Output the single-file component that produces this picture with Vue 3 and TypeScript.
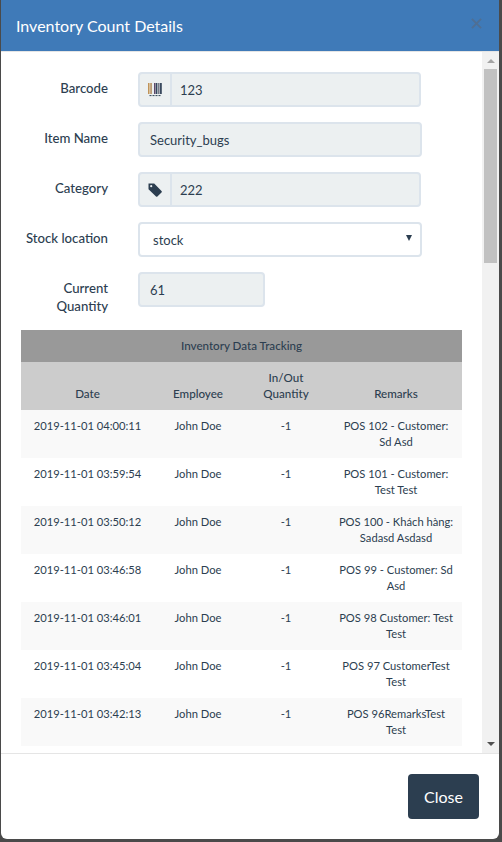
<script setup lang="ts">
interface Row { date: string; remarks: string }
const rows: Row[] = [
  { date: '2019-11-01 04:00:11', remarks: 'POS 102 - Customer: Sd Asd' },
  { date: '2019-11-01 03:59:54', remarks: 'POS 101 - Customer: Test Test' },
  { date: '2019-11-01 03:50:12', remarks: 'POS 100 - Khách hàng: Sadasd Asdasd' },
  { date: '2019-11-01 03:46:58', remarks: 'POS 99 - Customer: Sd Asd' },
  { date: '2019-11-01 03:46:01', remarks: 'POS 98 Customer: Test Test' },
  { date: '2019-11-01 03:45:04', remarks: 'POS 97 CustomerTest Test' },
  { date: '2019-11-01 03:42:13', remarks: 'POS 96RemarksTest Test' },
]
</script>

<template>
  <div class="page">
    <div class="modal">
      <header class="head">
        <h1 class="title">Inventory Count Details</h1>
        <svg class="x" viewBox="0 0 12 12" width="11" height="11"><path d="M1 1l10 10M11 1L1 11" stroke="#4f6f94" stroke-width="2" fill="none" /></svg>
      </header>
      <div class="middle">
        <div class="content">
          <div class="row">
            <label class="lbl">Barcode</label>
            <div class="group">
              <span class="addon">
                <svg viewBox="0 0 14 14" width="14" height="14">
                  <rect x="0" y="0" width="1.4" height="11" fill="#c0935a" />
                  <rect x="1.4" y="0" width="1" height="11" fill="#d8b98a" />
                  <rect x="2.4" y="0" width="1.4" height="11" fill="#b08a5a" />
                  <rect x="6" y="0" width="1.6" height="11" fill="#5a4a6a" />
                  <rect x="8" y="0" width="1.4" height="11" fill="#34495e" />
                  <rect x="10" y="0" width="1" height="11" fill="#7a7a8a" />
                  <rect x="11.6" y="0" width="2.2" height="11" fill="#3a4a5e" />
                  <path d="M1.5 12.6h11" stroke="#2c3e50" stroke-width="1" stroke-dasharray="2 1" />
                </svg>
              </span>
              <span class="val">123</span>
            </div>
          </div>
          <div class="row">
            <label class="lbl">Item Name</label>
            <div class="field wide">Security_bugs</div>
          </div>
          <div class="row">
            <label class="lbl">Category</label>
            <div class="group">
              <span class="addon">
                <svg viewBox="0 0 14 14" width="14" height="14">
                  <path d="M0.5 0.5h5.7L13.5 8a1 1 0 0 1 0 1.4L9.4 13.5a1 1 0 0 1-1.4 0L0.5 6.2z" fill="#2c3e50" />
                  <circle cx="3.2" cy="3.2" r="1.1" fill="#ecf0f1" />
                </svg>
              </span>
              <span class="val">222</span>
            </div>
          </div>
          <div class="row">
            <label class="lbl">Stock location</label>
            <div class="select">
              <span>stock</span>
              <i class="caret"></i>
            </div>
          </div>
          <div class="row qty">
            <label class="lbl">Current Quantity</label>
            <div class="field short">61</div>
          </div>
          <table class="tbl">
            <colgroup>
              <col class="c1" /><col class="c2" /><col class="c3" /><col class="c4" />
            </colgroup>
            <thead>
              <tr class="t1"><th colspan="4">Inventory Data Tracking</th></tr>
              <tr class="t2">
                <th>Date</th><th>Employee</th><th>In/Out Quantity</th><th>Remarks</th>
              </tr>
            </thead>
            <tbody>
              <tr v-for="r in rows" :key="r.date">
                <td>{{ r.date }}</td><td>John Doe</td><td>-1</td><td>{{ r.remarks }}</td>
              </tr>
            </tbody>
          </table>
        </div>
        <div class="bar">
          <i class="arrow up"></i>
          <div class="thumb"></div>
          <i class="arrow down"></i>
        </div>
      </div>
      <footer class="foot">
        <button class="close" type="button">Close</button>
      </footer>
    </div>
  </div>
</template>

<style>
html, body { margin: 0; background: #4a4a4a; }
</style>

<style scoped>
.page {
  width: 502px;
  height: 842px;
  box-sizing: border-box;
  padding: 0 3px 3px 1px;
  background: #4a4a4a;
  font-family: Lato, "Noto Sans", sans-serif;
  color: #2c3e50;
  overflow: hidden;
}
.modal {
  height: 100%;
  display: flex;
  flex-direction: column;
  background: #fff;
  border-radius: 0 0 6px 6px;
  overflow: hidden;
}
.head {
  height: 52px;
  flex: none;
  box-sizing: border-box;
  padding: 0 17px 0 15px;
  background: #3f7ab8;
  border-bottom: 1px solid #e5e5e5;
  display: flex;
  align-items: center;
  justify-content: space-between;
}
.title { margin: 0; font-size: 16px; font-weight: 400; color: #fff; line-height: 51px; }
.x { margin-bottom: 5px; }
.middle { flex: 1; min-height: 0; display: flex; }
.content {
  flex: 1;
  min-width: 0;
  overflow: hidden;
  padding: 20px 20px 0 20px;
  box-sizing: border-box;
}
.row { display: flex; height: 35px; margin-bottom: 15px; }
.row.qty { height: 43px; margin-bottom: 15px; }
.lbl {
  width: 87px;
  flex: none;
  text-align: right;
  font-size: 13.2px;
  font-weight: 500;
  line-height: 18px;
  padding-top: 7px;
  margin-right: 30px;
}
.group, .field, .select {
  box-sizing: border-box;
  height: 35px;
  border: 2px solid #dce4ec;
  border-radius: 4px;
  font-size: 13px;
}
.group { width: 283px; display: flex; background: #ecf0f1; }
.addon {
  width: 30px;
  flex: none;
  display: flex;
  align-items: center;
  justify-content: center;
  border-right: 2px solid #dce4ec;
}
.val { padding-left: 8px; line-height: 32px; }
.field { background: #ecf0f1; padding-left: 10px; line-height: 32px; }
.wide { width: 284px; }
.short { width: 127px; }
.select {
  width: 284px;
  background: #fff;
  padding-left: 13px;
  line-height: 32px;
  position: relative;
}
.caret {
  position: absolute;
  right: 8px;
  top: 11px;
  border-left: 3px solid transparent;
  border-right: 3px solid transparent;
  border-top: 6px solid #2c3e50;
}
.tbl {
  width: 441px;
  border-collapse: collapse;
  table-layout: fixed;
  font-size: 11.2px;
  line-height: 16px;
}
.c1 { width: 133px; }
.c2, .c3 { width: 88px; }
.c4 { width: 132px; }
th, td { padding: 8px; text-align: center; }
th { font-weight: 500; vertical-align: bottom; font-size: 11.6px; }
td { vertical-align: top; font-weight: 400; }
.t1 th { background: #999; }
.t2 th { background: #ccc; }
tbody tr:nth-child(odd) td { background: #f9f9f9; }
.bar {
  width: 17px;
  flex: none;
  background: #f1f1f1;
  position: relative;
}
.thumb {
  position: absolute;
  top: 17px;
  left: 2px;
  width: 13px;
  height: 194px;
  background: #c1c1c1;
}
.arrow { position: absolute; left: 5px; border-left: 4px solid transparent; border-right: 4px solid transparent; }
.up { top: 7px; border-bottom: 4px solid #a3a3a3; }
.down { bottom: 7px; border-top: 4px solid #505050; }
.foot {
  height: 86px;
  flex: none;
  box-sizing: border-box;
  border-top: 1px solid #e5e5e5;
  padding: 20px 20px 0 0;
  display: flex;
  justify-content: flex-end;
  align-items: flex-start;
}
.close {
  width: 71px;
  height: 45px;
  border: none;
  border-radius: 4px;
  background: #2c3e50;
  color: #fff;
  font-family: inherit;
  font-size: 16px;
  padding: 0;
}
</style>
